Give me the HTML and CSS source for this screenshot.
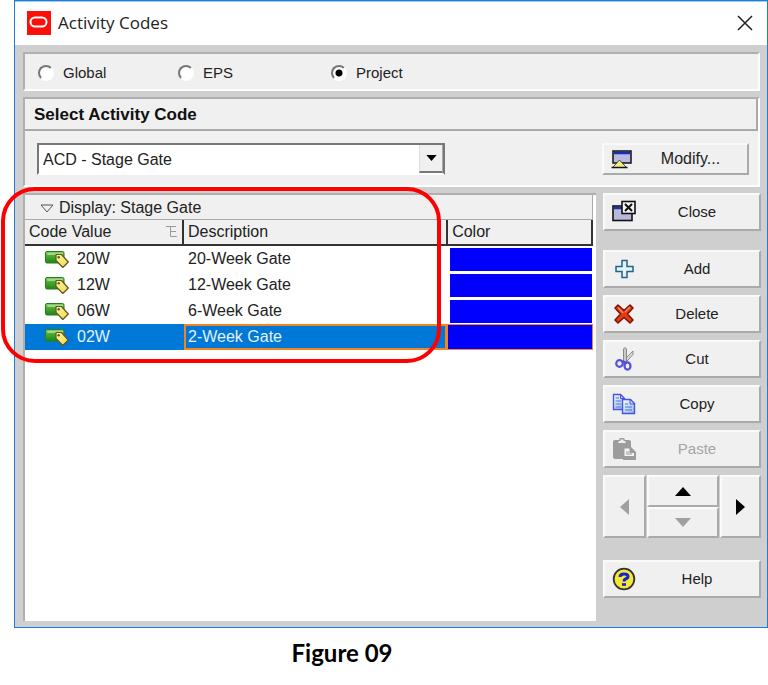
FILE: index.html
```html
<!DOCTYPE html>
<html lang="en">
<head>
<meta charset="utf-8">
<title>Activity Codes</title>
<link rel="stylesheet" href="styles.css">
</head>
<body>
<svg class="defs" aria-hidden="true">
  <defs>
    <linearGradient id="green" x1="0" y1="0" x2="0" y2="1">
      <stop offset="0" stop-color="#8fd070"/><stop offset=".35" stop-color="#4fae35"/><stop offset="1" stop-color="#1f8416"/>
    </linearGradient>
    <linearGradient id="tagfill" x1="0" y1="0" x2="1" y2="1">
      <stop offset="0" stop-color="#fff4a0"/><stop offset="1" stop-color="#f0d84c"/>
    </linearGradient>
    <linearGradient id="page" x1="0" y1="0" x2="1" y2="1">
      <stop offset="0" stop-color="#ffffff"/><stop offset="1" stop-color="#8cb8f0"/>
    </linearGradient>
    <symbol id="code" viewBox="0 0 24 18">
      <rect x="0.500" y="1.500" width="18.500" height="11.500" rx="1.500" fill="url(#green)" stroke="#267f1c"/>
      <path d="M2.500 4H18" stroke="#b4e29c" stroke-width="1.500"/>
      <path d="M11 4.500H16.500L23.300 12L17.800 17.500L11 10.500Z" fill="url(#tagfill)" stroke="#5f5822" stroke-width="1.200" stroke-linejoin="round"/>
      <circle cx="13.700" cy="7.200" r="1.200" fill="#5f5822"/>
    </symbol>
  </defs>
</svg>
<figure class="figure">
  <main class="window">
    <header class="titlebar">
      <svg class="logo" viewBox="0 0 24 24" aria-hidden="true"><rect width="24" height="24" fill="#fa0f0a"/><rect x="3.500" y="6.500" width="16" height="9" rx="4.500" fill="none" stroke="#fff" stroke-width="2"/></svg>
      <h1 class="title">Activity Codes</h1>
      <button class="close" aria-label="Close window"><svg viewBox="0 0 16 16"><path d="M1 1L15 15M15 1L1 15" stroke="#222" stroke-width="1.500"/></svg></button>
    </header>
    <div class="content">
      <div class="panel scope">
        <label class="option"><input type="radio" name="scope">Global</label>
        <label class="option"><input type="radio" name="scope">EPS</label>
        <label class="option"><input type="radio" name="scope" checked>Project</label>
      </div>
      <section class="panel">
        <h2 class="heading">Select Activity Code</h2>
        <div class="picker">
          <div class="dropdown">
            <select aria-label="Activity code"><option>ACD - Stage Gate</option></select>
            <span class="arrow"><svg viewBox="0 0 12 7"><path d="M0 0H12L6 7Z"/></svg></span>
          </div>
          <button class="btn modify">
            <svg class="icon" viewBox="0 0 24 24" aria-hidden="true"><rect x="3" y="4" width="18" height="12" fill="#b9b9e4" stroke="#111" stroke-width="1.500"/><path d="M4 6H20" stroke="#1732a8" stroke-width="2.500"/><path d="M3 20.500L9.500 13L16 20.500Z" fill="#f4ee7a"/><path d="M3 20L9.500 13L16 20" fill="none" stroke="#444" stroke-width="1"/><path d="M1.500 20.500H17.500" stroke="#111" stroke-width="1.500"/></svg>
            <span>Modify...</span>
          </button>
        </div>
      </section>
      <div class="main">
        <section class="list">
          <button class="display"><svg viewBox="0 0 14 9" aria-hidden="true"><path d="M1 1H13L7 8Z" fill="none" stroke="#555"/></svg>Display: Stage Gate</button>
          <table class="codes">
            <thead>
              <tr>
                <th class="c-code"><div class="head">Code Value<svg viewBox="0 0 12 14" aria-hidden="true"><path d="M0 1.500H10M4.500 1.500V11.500M4.500 6.500H10M4.500 11.500H11" fill="none" stroke="#999"/></svg></div></th>
                <th class="c-desc">Description</th>
                <th>Color</th>
              </tr>
            </thead>
            <tbody>
              <tr><td><div class="code"><svg><use href="#code"/></svg>20W</div></td><td>20-Week Gate</td><td class="color"><div class="swatch"></div></td></tr>
              <tr><td><div class="code"><svg><use href="#code"/></svg>12W</div></td><td>12-Week Gate</td><td class="color"><div class="swatch"></div></td></tr>
              <tr><td><div class="code"><svg><use href="#code"/></svg>06W</div></td><td>6-Week Gate</td><td class="color"><div class="swatch"></div></td></tr>
              <tr class="selected"><td><div class="code"><svg><use href="#code"/></svg>02W</div></td><td class="focus">2-Week Gate</td><td class="color"><div class="swatch"></div></td></tr>
            </tbody>
          </table>
        </section>
        <aside class="side">
          <button class="btn">
            <svg class="icon" viewBox="0 0 24 24" aria-hidden="true"><rect x="1" y="6" width="19" height="14.500" fill="#b9b9dc" stroke="#111" stroke-width="1.600"/><path d="M2 8H14" stroke="#1732a8" stroke-width="2.500"/><rect x="10" y="1.500" width="13" height="12" fill="#f4f4f4" stroke="#111" stroke-width="1.600"/><path d="M13 4L20 11M20 4L13 11" stroke="#111" stroke-width="2"/></svg>
            <span>Close</span>
          </button>
          <div class="actions">
            <button class="btn">
              <svg class="icon" viewBox="0 0 24 24" aria-hidden="true"><path d="M10 3.500H15V9.500H21V14.500H15V20.500H10V14.500H4V9.500H10Z" fill="#e2f3fb" stroke="#246484" stroke-width="1.500"/></svg>
              <span>Add</span>
            </button>
            <button class="btn">
              <svg class="icon" viewBox="0 0 24 24" aria-hidden="true"><path d="M6 3L12 8.500L18 3L21 6L15.500 12L21 18L18 21L12 15.500L6 21L3 18L8.500 12L3 6Z" fill="#e83a10" stroke="#7c1204" stroke-width="1.500" stroke-linejoin="round"/><path d="M6 5.500L11 11M18 5L13 10" stroke="#ff9060" stroke-width="1.300"/></svg>
              <span>Delete</span>
            </button>
            <button class="btn">
              <svg class="icon" viewBox="0 0 24 24" aria-hidden="true"><path d="M14 11L21 4V7.500L15 14Z" fill="#ddd" stroke="#888"/><path d="M11.500 16V2Q13 -1 14.500 2V16Z" fill="#c9c9c9" stroke="#888"/><circle cx="7.500" cy="16.500" r="3.300" fill="none" stroke="#5350dc" stroke-width="2.200"/><ellipse cx="15.500" cy="19" rx="3" ry="3.700" fill="none" stroke="#5350dc" stroke-width="2.200"/><path d="M10 14L14 15.500" stroke="#5350dc" stroke-width="2"/></svg>
              <span>Cut</span>
            </button>
            <button class="btn">
              <svg class="icon" viewBox="0 0 24 24" aria-hidden="true"><g fill="url(#page)" stroke="#4a50e0" stroke-width="1.400"><path d="M1.500 2.500H8.500L12.500 6.500V17.500H1.500Z"/><path d="M10.500 7.500H18.500L22.500 11.500V21.500H10.500Z"/></g><path d="M8.500 3V6.500H12M18 8V12H22" fill="none" stroke="#4a50e0"/><path d="M3.500 6H7M3.500 9H9M3.500 12H9M3.500 15H9M13 12H16M13 15H20M13 18H20" stroke="#4b74cf" stroke-width="1.200"/></svg>
              <span>Copy</span>
            </button>
            <button class="btn" disabled>
              <svg class="icon" viewBox="0 0 24 24" aria-hidden="true"><path d="M3 3H7L8 1H12L13 3H17Q19 3 19 5V22H3Q1 22 1 20V5Q1 3 3 3Z" fill="#9c9c9c"/><path d="M6 6H14L13 4H11.500V2.500H8.500V4H7Z" fill="#eee"/><path d="M11 10H19L24 15V23H11Z" fill="#9c9c9c"/><path d="M12.500 11.500H17.500V16H22V19H12.500Z" fill="#f4f4f4"/><path d="M14 15H17M14 17H20" stroke="#9c9c9c"/></svg>
              <span>Paste</span>
            </button>
          </div>
          <div class="arrows">
            <button class="btn left" aria-label="Move left" disabled><svg width="9" height="16" viewBox="0 0 9 16"><path d="M9 0V16L0 8Z"/></svg></button>
            <button class="btn" aria-label="Move up"><svg width="16" height="9" viewBox="0 0 16 9"><path d="M0 9H16L8 0Z"/></svg></button>
            <button class="btn right" aria-label="Move right"><svg width="9" height="16" viewBox="0 0 9 16"><path d="M0 0V16L9 8Z"/></svg></button>
            <button class="btn" aria-label="Move down" disabled><svg width="16" height="9" viewBox="0 0 16 9"><path d="M0 0H16L8 9Z"/></svg></button>
          </div>
          <button class="btn">
            <svg class="icon" viewBox="0 0 24 24" aria-hidden="true"><circle cx="12" cy="12" r="10.300" fill="#f4ea35" stroke="#333" stroke-width="1.800"/><path d="M8 10Q8 7 12 7Q16 7 16 9.500Q16 11 13.500 12Q12 12.600 12 14.500" fill="none" stroke="#1523d8" stroke-width="3"/><path d="M10 17.500H14" stroke="#1523d8" stroke-width="2.600"/></svg>
            <span>Help</span>
          </button>
        </aside>
      </div>
    </div>
  </main>
  <div class="callout"></div>
  <figcaption class="caption">Figure 09</figcaption>
</figure>
</body>
</html>
```
FILE: styles.css
```css
* { box-sizing: border-box; }
body { margin: 0; background: #fff; color: #222; font: 15px/20px "Liberation Sans", Arial, sans-serif; }
button, select { font: inherit; color: inherit; margin: 0; }
svg { display: block; flex: none; }
.defs { position: absolute; width: 0; height: 0; }

.figure { position: relative; margin: 0; }
.window { margin-left: 14px; border: 1px solid #1a7fd8; background: #cfcfcf; }

.titlebar { display: flex; align-items: center; height: 44px; padding: 0 14px 2px 12px; background: #fff; border-top: 1px solid #9fcdf3; }
.logo { width: 24px; height: 24px; }
.title { flex: 1; margin: 0 0 0 7px; font: 17px/24px "Open Sans", "Noto Sans", sans-serif; }
.close { padding: 0; border: 0; background: none; }
.close svg { width: 16px; height: 16px; }

.content { display: flex; flex-direction: column; gap: 6px; padding: 7px 6px 6px 8px; }
.panel { margin-right: 1px; background: #f0f0f0; border: 2px solid #fff; border-top-color: #b0b0b0; border-left-color: #b0b0b0; }
.scope { display: grid; grid-template-columns: 140px 153px 1fr; align-items: center; height: 39px; padding-left: 13px; }
.option { display: flex; align-items: center; gap: 9px; padding-top: 2px; }
.option input { appearance: none; width: 16px; height: 16px; margin: 0; border: 2px solid #777; border-right-color: #fff; border-bottom-color: #fff; border-radius: 50%; background: #fff; }
.option input:checked { background: radial-gradient(circle, #000 3px, #fff 4px); }

.heading { margin: 0; padding: 5px 9px 3px; border: 1px solid #aaa; border-width: 0 2px 2px 0; font-size: 17px; line-height: 22px; color: #111; }
.picker { display: flex; align-items: center; justify-content: space-between; padding: 12px 9px 10px 12px; font-size: 16px; }
.dropdown { position: relative; width: 408px; border: 2px solid #777; border-bottom: 2px solid #fff; background: #fff; }
.dropdown select { display: block; appearance: none; width: 100%; height: 28px; padding: 2px 30px 0 4px; border: 0; border-radius: 0; background: #fff; }
.arrow { position: absolute; top: 0; right: 0; bottom: 0; display: grid; place-items: center; width: 24px; background: #f0f0f0; border-left: 1px solid #ddd; border-bottom: 2px solid #777; border-right: 1px solid #aaa; pointer-events: none; }
.arrow svg { width: 11px; height: 6px; }

.btn { display: flex; align-items: center; width: 100%; height: 38px; padding: 0 1px 0 7px; border: 2px solid #fafafa; border-right-color: #aaa; border-bottom-color: #aaa; border-radius: 0; background: #f0f0f0; }
.btn span { flex: 1; text-align: center; }
.btn:disabled { color: #a5a5a5; }
.icon { width: 24px; height: 24px; }
.modify { width: 147px; height: 32px; padding: 0 0 0 6px; }

.main { display: grid; grid-template-columns: 1fr 158px; gap: 7px; }
.list { padding-right: 3px; background: #fff; border: 2px solid #b0b0b0; border-width: 2px 0 0 2px; font-size: 16px; }
.display { display: flex; align-items: center; gap: 5px; width: 100%; height: 25px; padding: 2px 0 0 15px; border: 1px solid #aaa; border-width: 0 1px 1px 0; border-radius: 0; background: #f0f0f0; }
.display svg { width: 14px; height: 9px; }

.codes { width: 100%; table-layout: fixed; border-collapse: separate; border-spacing: 0; }
.c-code { width: 28%; }
.c-desc { width: 46.5%; }
.codes th { height: 26px; padding: 0 4px; text-align: left; font-weight: normal; background: #f0f0f0; border-right: 2px solid #333; border-bottom: 2px solid #333; }
.head { display: flex; align-items: center; justify-content: space-between; }
.head svg { width: 12px; height: 14px; }
.codes td { height: 26px; padding: 0 4px 1px; }
.code { display: flex; align-items: center; gap: 8px; padding-left: 16px; }
.code svg { width: 24px; height: 18px; }
.codes .color { padding: 2px 1px 1px 2px; background: #fff; }
.swatch { height: 23px; background: #00f; }
.selected td { background: #0078d7; color: #e4f1fc; }
.codes .focus { padding: 0 2px 1px; border: 2px solid #f28522; border-right-width: 3px; }
.codes .selected .color { padding: 0; border: 1px solid #f28522; border-left: 0; }
.selected .swatch { height: 24px; }

.side { display: flex; flex-direction: column; padding-bottom: 23px; }
.actions { display: flex; flex-direction: column; gap: 7px; margin: 19px 0 7px; }
.arrows { display: grid; grid-template-columns: 43px 1fr 41px; grid-template-rows: 32px 31px; column-gap: 1px; margin-bottom: 22px; }
.arrows .btn { justify-content: center; height: auto; padding: 0; }
.arrows .left, .arrows .right { grid-row: span 2; }
.arrows svg { fill: #000; }
.arrows :disabled svg { fill: #a0a0a0; }

.callout { position: absolute; top: 187px; left: 1px; width: 440px; height: 176px; border: 4px solid #f00; border-radius: 34px; pointer-events: none; }
.caption { padding: 9px 84px 0 0; text-align: center; font: bold 24px/32px Lato, "Open Sans", sans-serif; color: #000; }
```
